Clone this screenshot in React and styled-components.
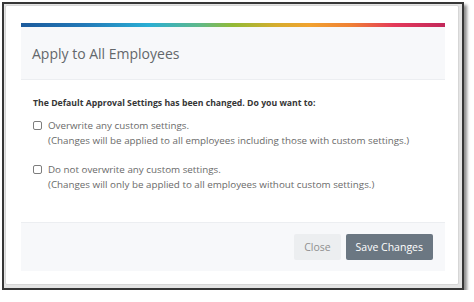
import React from "react";
import styled, { createGlobalStyle } from "styled-components";

const Global = createGlobalStyle`
  html, body { margin: 0; padding: 0; background: #ffffff; }
  body { font-family: "Open Sans", "Liberation Sans", sans-serif; }
  * { box-sizing: border-box; }
`;

const Frame = styled.div`
  margin: 2px 0 0 2px;
  width: 462px;
  height: 288px;
  border: 2px solid #363636;
  background: #e4e4e4;
  padding: 1px 3px 3px 1px;
  box-shadow: 3px 3px 3px rgba(0, 0, 0, 0.45);
`;

const Card = styled.div`
  width: 454px;
  height: 280px;
  background: #ffffff;
  border: 1px solid #d6d6d6;
  border-radius: 2px;
  padding: 17px 13px 13px 15px;
  display: flex;
  flex-direction: column;
`;

const GradientBar = styled.div`
  height: 4px;
  background: linear-gradient(
    to right,
    #1b5a9c 0%,
    #2379b8 15%,
    #2aaed4 30%,
    #5fb98a 42%,
    #93ba35 50%,
    #d5ad2e 60%,
    #f1a22f 68%,
    #ef7f35 78%,
    #e4395a 88%,
    #c2285a 100%
  );
`;

const Header = styled.div`
  height: 53px;
  background: #f7f8fa;
  border-bottom: 1px solid #eceef1;
  display: flex;
  align-items: center;
  padding-left: 11px;
`;

const Title = styled.h2`
  margin: 0;
  font-size: 14px;
  font-weight: 400;
  color: #63676b;
`;

const Body = styled.div`
  height: 142px;
  padding: 16px 0 0 12px;
  display: flex;
  flex-direction: column;
`;

const Lead = styled.p`
  margin: 0 0 7px;
  font-size: 8.7px;
  line-height: 15px;
  font-weight: 700;
  color: #363636;
`;

const Option = styled.label`
  display: flex;
  align-items: flex-start;
  gap: 6px;
  margin-bottom: ${(p) => (p.$last ? 0 : 14)}px;
  cursor: pointer;
`;

const Box = styled.span`
  flex: none;
  width: 9px;
  height: 9px;
  margin-top: 3px;
  border: 1px solid #7d7d7d;
  border-radius: 2px;
  background: #fff;
`;

const OptionText = styled.div`
  font-size: 9.8px;
  line-height: 15px;
  color: #6a6a6a;
`;

const Footer = styled.div`
  height: 49px;
  background: #f7f8fa;
  border-top: 1px solid #eceef1;
  display: flex;
  align-items: center;
  justify-content: flex-end;
  gap: 5px;
  padding-right: 12px;
`;

const Button = styled.button`
  height: 26px;
  padding: 0 10px;
  border: none;
  border-radius: 2px;
  font-family: "Open Sans", "Liberation Sans", sans-serif;
  font-size: 10.5px;
  background: ${(p) => (p.$primary ? "#6b7782" : "#eceef0")};
  color: ${(p) => (p.$primary ? "#ffffff" : "#8f8f8f")};
  cursor: pointer;
`;

export default function App() {
  return (
    <>
      <Global />
      <Frame>
        <Card>
          <GradientBar />
          <Header>
            <Title>Apply to All Employees</Title>
          </Header>
          <Body>
            <Lead>The Default Approval Settings has been changed. Do you want to:</Lead>
            <Option>
              <Box />
              <OptionText>
                Overwrite any custom settings.
                <br />
                (Changes will be applied to all employees including those with custom settings.)
              </OptionText>
            </Option>
            <Option $last>
              <Box />
              <OptionText>
                Do not overwrite any custom settings.
                <br />
                (Changes will only be applied to all employees without custom settings.)
              </OptionText>
            </Option>
          </Body>
          <Footer>
            <Button>Close</Button>
            <Button $primary>Save Changes</Button>
          </Footer>
        </Card>
      </Frame>
    </>
  );
}
